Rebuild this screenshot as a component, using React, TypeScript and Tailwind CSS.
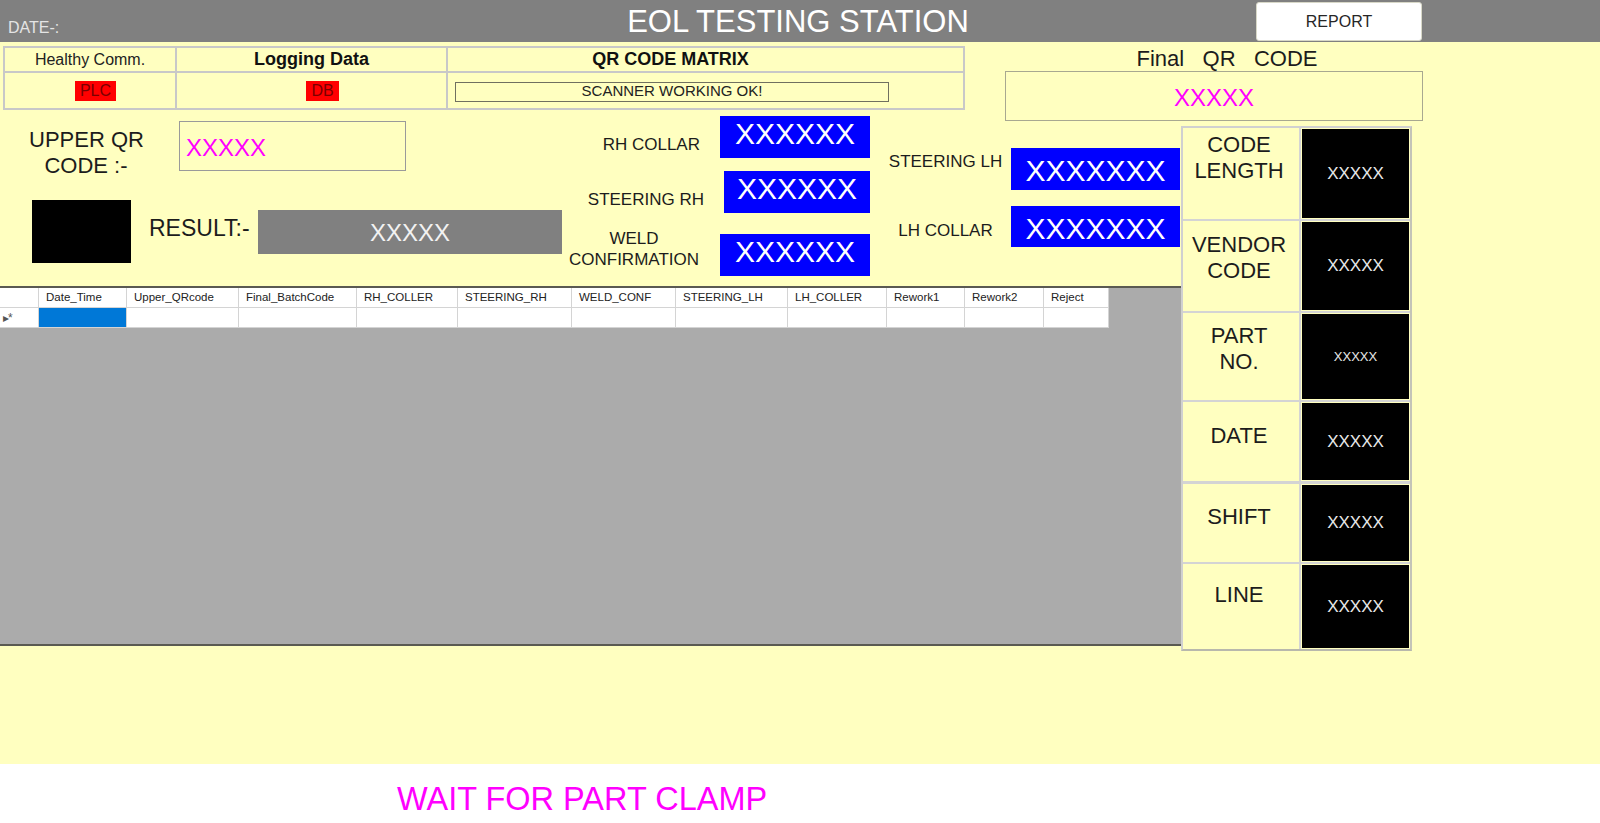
import type { ReactNode } from 'react';

const gridCols = [
  { name: 'Date_Time', w: 'w-[88px]' },
  { name: 'Upper_QRcode', w: 'w-[112px]' },
  { name: 'Final_BatchCode', w: 'w-[118px]' },
  { name: 'RH_COLLER', w: 'w-[101px]' },
  { name: 'STEERING_RH', w: 'w-[114px]' },
  { name: 'WELD_CONF', w: 'w-[104px]' },
  { name: 'STEERING_LH', w: 'w-[112px]' },
  { name: 'LH_COLLER', w: 'w-[99px]' },
  { name: 'Rework1', w: 'w-[78px]' },
  { name: 'Rework2', w: 'w-[79px]' },
  { name: 'Reject', w: 'w-[65px]' },
];

const codeParts = [
  { label: ['CODE', 'LENGTH'], h: 'h-[91px]', pt: 'pt-[4px]', value: 'text-[17px]' },
  { label: ['VENDOR', 'CODE'], h: 'h-[90px]', pt: 'pt-[11px]', value: 'text-[17px]' },
  { label: ['PART', 'NO.'], h: 'h-[87px]', pt: 'pt-[10px]', value: 'text-[13px]' },
  { label: ['DATE'], h: 'h-[79px]', pt: 'pt-[21px]', value: 'text-[17px]' },
  { label: ['SHIFT'], h: 'h-[78px]', pt: 'pt-[20px]', value: 'text-[17px]' },
  { label: ['LINE'], h: 'h-[85px]', pt: 'pt-[18px]', value: 'text-[17px]' },
];

function BlueBox({ className, children }: { className: string; children: ReactNode }) {
  return (
    <div className={`bg-[#0000ff] text-white text-[30px] leading-[30px] text-center ${className}`}>
      {children}
    </div>
  );
}

function Header() {
  return (
    <div className="h-[42px] bg-[#808080] flex items-center">
      <div className="w-[340px] pl-[8px] pt-[13px] text-[16px] text-[#e4e4e4]">DATE-:</div>
      <div className="flex-1 text-center text-[31px] leading-none text-white">EOL TESTING STATION</div>
      <div className="w-[344px] h-full pt-[2px] pb-[1px]">
        <button className="w-[166px] h-[39px] bg-white rounded-[3px] border border-[#d8d8c8] text-[16px] text-[#262626]">
          REPORT
        </button>
      </div>
    </div>
  );
}

function StatusTable() {
  return (
    <div className="ml-[3px] mt-[4px] w-[962px] h-[64px] border-2 border-[#c8c8c8] grid grid-cols-[172px_271px_1fr] grid-rows-[25px_35px]">
      <div className="border-r-2 border-b-2 border-[#c8c8c8] flex items-center justify-center text-[16px] text-[#222]">
        Healthy Comm.
      </div>
      <div className="border-r-2 border-b-2 border-[#c8c8c8] flex items-center justify-center text-[18px] font-bold text-[#111]">
        Logging Data
      </div>
      <div className="border-b-2 border-[#c8c8c8] flex items-center justify-center pr-[70px] text-[18px] font-bold text-[#111]">
        QR CODE MATRIX
      </div>
      <div className="border-r-2 border-[#c8c8c8] flex items-center justify-center pl-[11px] pt-[1px]">
        <span className="bg-[#ff0000] text-[#7a0000] text-[16px] leading-[20px] px-[5px]">PLC</span>
      </div>
      <div className="border-r-2 border-[#c8c8c8] flex items-center justify-center pl-[22px] pt-[1px]">
        <span className="bg-[#ff0000] text-[#7a0000] text-[16px] leading-[20px] px-[5px]">DB</span>
      </div>
      <div className="flex items-center pl-[7px] pt-[2px]">
        <div className="w-[434px] h-[20px] border border-[#707060] flex items-center justify-center text-[15px] text-[#222]">
          SCANNER WORKING OK!
        </div>
      </div>
    </div>
  );
}

function Controls() {
  return (
    <div className="h-[165px] flex">
      <div className="w-[562px] flex flex-col">
        <div className="h-[79px] flex items-start">
          <div className="ml-[29px] mt-[6px] w-[114px] text-center text-[22px] leading-[26px] whitespace-nowrap">
            UPPER QR
            <br />
            CODE :-
          </div>
          <div className="ml-[36px] w-[227px] h-[50px] border border-[#9a9a9a] flex items-center pl-[6px] pt-[3px] text-[24px] text-[#ff00ff]">
            XXXXX
          </div>
        </div>
        <div className="flex items-start">
          <div className="ml-[32px] w-[99px] h-[63px] bg-black" />
          <div className="ml-[18px] mt-[15px] w-[101px] text-[23px] leading-[26px] whitespace-nowrap">RESULT:-</div>
          <div className="ml-[8px] mt-[10px] w-[304px] h-[44px] bg-[#808080] flex items-center justify-center pt-[2px] text-[24px] text-[#f2f2f2]">
            XXXXX
          </div>
        </div>
      </div>

      <div className="w-[308px] -mt-[5px] flex flex-col">
        <div className="flex items-start justify-end">
          <div className="mt-[19px] mr-[20px] text-[17px] leading-[20px] whitespace-nowrap">RH COLLAR</div>
          <BlueBox className="w-[150px] h-[42px] pt-[3px]">XXXXXX</BlueBox>
        </div>
        <div className="mt-[13px] flex items-start justify-end">
          <div className="mt-[19px] mr-[20px] text-[17px] leading-[20px] whitespace-nowrap">STEERING RH</div>
          <BlueBox className="w-[146px] h-[42px] pt-[3px]">XXXXXX</BlueBox>
        </div>
        <div className="mt-[15px] flex items-end justify-end">
          <div className="mb-[6px] mr-[21px] text-center text-[17px] leading-[21px] whitespace-nowrap">
            WELD
            <br />
            CONFIRMATION
          </div>
          <BlueBox className="w-[150px] h-[42px] pt-[3px]">XXXXXX</BlueBox>
        </div>
      </div>

      <div className="w-[311px] flex flex-col">
        <div className="mt-[27px] flex items-start">
          <div className="ml-[10px] mt-[4px] w-[131px] text-center text-[17px] leading-[20px] whitespace-nowrap">STEERING LH</div>
          <BlueBox className="w-[169px] h-[42px] pt-[8px]">XXXXXXX</BlueBox>
        </div>
        <div className="mt-[16px] flex items-start">
          <div className="ml-[10px] mt-[15px] w-[131px] text-center text-[17px] leading-[20px] whitespace-nowrap">LH COLLAR</div>
          <BlueBox className="w-[169px] h-[41px] pt-[8px]">XXXXXXX</BlueBox>
        </div>
      </div>
    </div>
  );
}

function Grid() {
  return (
    <div className="h-[360px] bg-[#ababab] border-t-2 border-b-2 border-[#5a5a52] flex flex-col">
      <div className="flex h-[20px] text-[11.5px] text-[#222]">
        <div className="w-[39px] bg-white border-r border-b border-[#d4d4d4]" />
        {gridCols.map((c) => (
          <div key={c.name} className={`${c.w} bg-white border-r border-b border-[#d4d4d4] pl-[7px] flex items-center whitespace-nowrap`}>
            {c.name}
          </div>
        ))}
      </div>
      <div className="flex h-[20px]">
        <div className="w-[39px] bg-white border-r border-b border-[#d4d4d4] flex items-center pl-[3px] text-[12px] text-[#555] leading-none tracking-[-1px]">
          ▸*
        </div>
        {gridCols.map((c, i) => (
          <div key={c.name} className={`${c.w} border-r border-b border-[#d4d4d4] ${i === 0 ? 'bg-[#0078d7]' : 'bg-white'}`} />
        ))}
      </div>
    </div>
  );
}

function SidePanel() {
  return (
    <div className="mt-[5px] w-[231px] h-[525px] border-2 border-[#d0d0d0] border-b-[#b8b8ac] border-r-[#c4c4b8] bg-[#d4d4d4] grid grid-cols-[116px_1fr] gap-[2px]">
      {codeParts.map((p) => (
        <div key={p.label.join(' ')} className="contents">
          <div className={`${p.h} ${p.pt} bg-[#ffffc0] pr-[4px] text-center text-[22px] leading-[26px] text-[#1c1c1c]`}>
            {p.label.map((l) => (
              <div key={l}>{l}</div>
            ))}
          </div>
          <div className={`${p.h} bg-[#ffffc0] p-[1px]`}>
            <div className={`h-full bg-black flex items-center justify-center text-[#e8e8e8] ${p.value}`}>XXXXX</div>
          </div>
        </div>
      ))}
    </div>
  );
}

export default function App() {
  return (
    <div className="w-[1600px] h-[823px] bg-white overflow-hidden font-['Liberation_Sans',Arial,sans-serif] text-[#1c1c1c]">
      <Header />
      <div className="h-[722px] bg-[#ffffc0] flex flex-col">
        <div className="h-[79px] flex">
          <StatusTable />
          <div className="ml-[40px] w-[418px] flex flex-col">
            <div className="h-[29px] pt-[3px] pl-[26px] flex items-center justify-center text-[22px] whitespace-pre">
              Final   QR   CODE
            </div>
            <div className="h-[50px] border border-[#a8a890] flex items-center justify-center pt-[3px] text-[24px] text-[#ff00ff]">
              XXXXX
            </div>
          </div>
        </div>
        <div className="flex">
          <div className="w-[1181px] flex flex-col">
            <Controls />
            <Grid />
          </div>
          <SidePanel />
        </div>
      </div>
      <div className="h-[59px] flex items-center pl-[397px] pt-[11px]">
        <span className="text-[32.5px] text-[#ff00ff]">WAIT FOR PART CLAMP</span>
      </div>
    </div>
  );
}
